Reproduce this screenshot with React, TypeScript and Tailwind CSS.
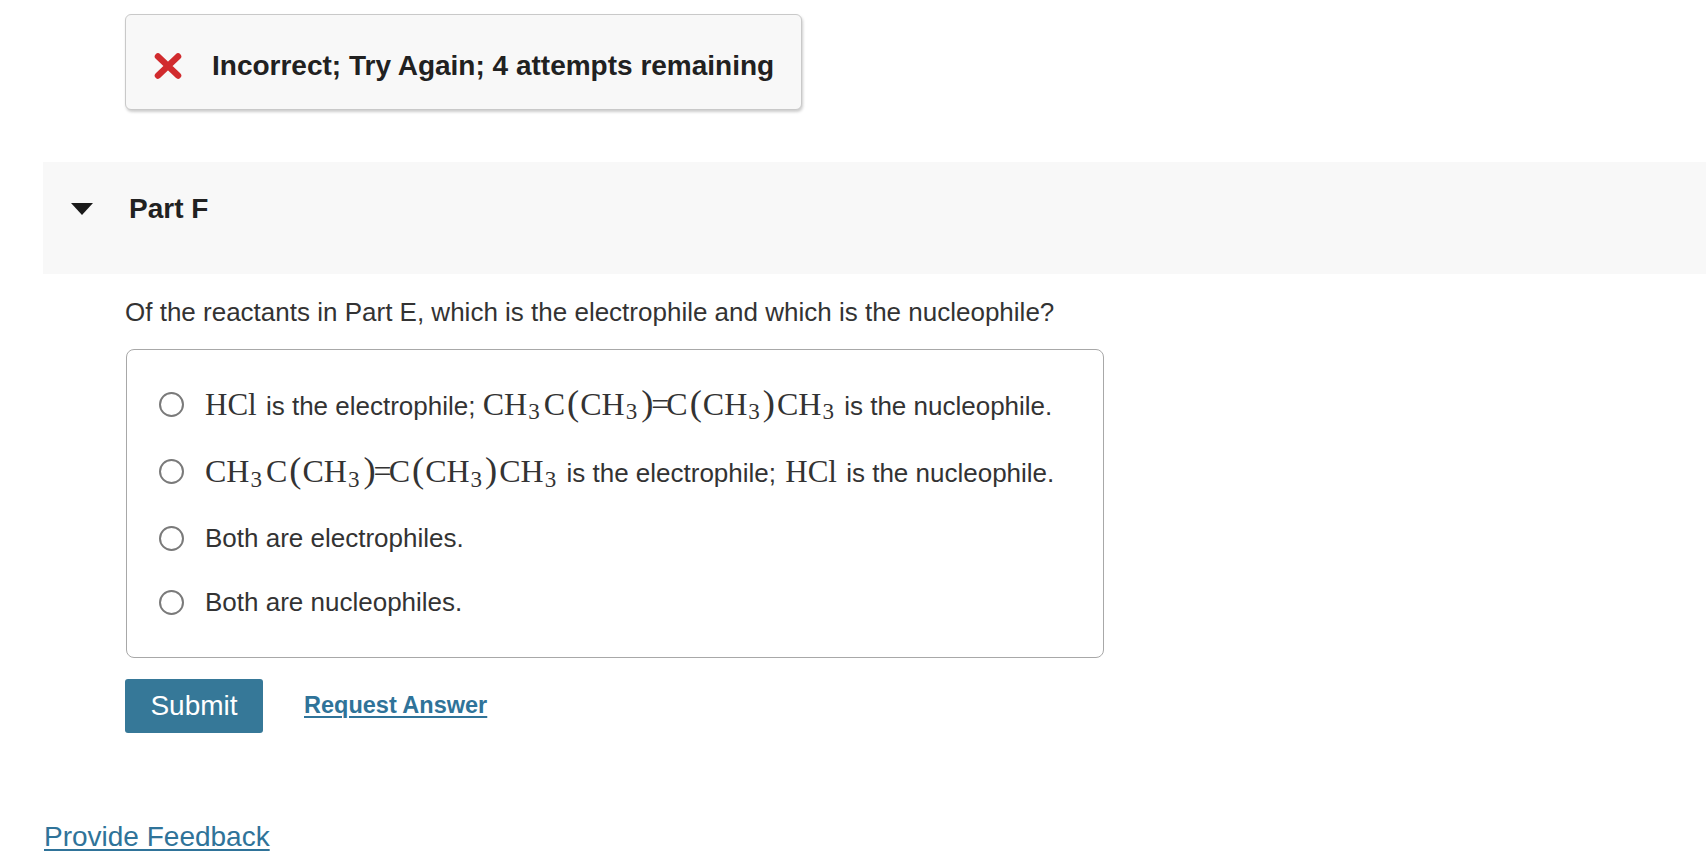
import React from "react";

const S3 = () => (
  <span className="relative top-[0.2em] text-[0.72em] ml-[1px] mr-[3px]">3</span>
);

const CH3 = () => (
  <span>
    CH
    <S3 />
  </span>
);

const P = ({ c, cls }: { c: string; cls: string }) => (
  <span className={"inline-block text-[1.14em] leading-none " + cls}>{c}</span>
);

const Formula = () => (
  <span className="font-['Liberation_Serif',serif] text-[32px] text-[#333] whitespace-nowrap">
    <CH3 />
    <span className="ml-[1px]">C</span>
    <P c="(" cls="ml-[2px] mr-[1px]" />
    <CH3 />
    <P c=")" cls="ml-[1px]" />
    <span className="-ml-[2px] -mr-[3px]">=</span>
    <span>C</span>
    <P c="(" cls="ml-[2px] mr-[1px]" />
    <CH3 />
    <P c=")" cls="mr-[2px]" />
    <CH3 />
  </span>
);

const HCl = () => (
  <span className="font-['Liberation_Serif',serif] text-[31px] text-[#333] mx-[2px]">HCl</span>
);

const Radio = () => (
  <span className="inline-block w-[25px] h-[25px] rounded-full border-2 border-[#7a7a7a] bg-white shrink-0" />
);

export default function App() {
  return (
    <div className="w-[1706px] h-[860px] overflow-hidden bg-white font-['Liberation_Sans',Arial,sans-serif] text-[#333]">
      <div className="pt-[14px] pl-[125px]">
        <div className="w-[677px] h-[96px] border border-[#c9c9c9] rounded-[6px] bg-[#f8f8f8] shadow-[1px_2px_3px_rgba(0,0,0,0.2)] flex items-center pl-[28px] pt-[7px]">
          <svg width="28" height="26" viewBox="0 0 28 26" className="shrink-0">
            <path d="M4 3.5 L24 22.5 M24 3.5 L4 22.5" stroke="#d12b2e" strokeWidth="6.5" strokeLinecap="round" />
          </svg>
          <span className="ml-[30px] text-[28px] font-bold text-[#212121] leading-none">
            Incorrect; Try Again; 4 attempts remaining
          </span>
        </div>
      </div>

      <div className="mt-[52px] ml-[43px] h-[112px] bg-[#f8f8f8] flex items-center pb-[18px]">
        <svg width="22" height="12" viewBox="0 0 22 12" className="ml-[28px] shrink-0">
          <path d="M0 0 L22 0 L11 12 Z" fill="#1a1a1a" />
        </svg>
        <span className="ml-[36px] text-[28px] font-bold text-[#212121] leading-none">Part F</span>
      </div>

      <div className="ml-[125px] mt-[20px] text-[26px] leading-[36px]">
        Of the reactants in Part E, which is the electrophile and which is the nucleophile?
      </div>

      <div className="ml-[126px] mt-[19px] w-[978px] h-[309px] border-[1.5px] border-[#a8a8a8] rounded-[8px] pt-[21px] pl-[32px]">
        <div className="h-[66px] flex items-center">
          <Radio />
          <span className="ml-[19px] text-[26px] whitespace-nowrap">
            <HCl /> is the electrophile; <Formula /> is the nucleophile.
          </span>
        </div>
        <div className="h-[69px] flex items-center">
          <Radio />
          <span className="ml-[21px] text-[26px] whitespace-nowrap">
            <Formula /> is the electrophile; <HCl /> is the nucleophile.
          </span>
        </div>
        <div className="h-[64px] flex items-center">
          <Radio />
          <span className="ml-[21px] text-[26px]">Both are electrophiles.</span>
        </div>
        <div className="h-[64px] flex items-center">
          <Radio />
          <span className="ml-[21px] text-[26px]">Both are nucleophiles.</span>
        </div>
      </div>

      <div className="ml-[125px] mt-[21px] flex items-center">
        <button className="w-[138px] h-[54px] rounded-[3px] bg-[#367898] text-white text-[28px] leading-none">
          Submit
        </button>
        <a className="ml-[41px] text-[23.5px] font-bold text-[#2f7399] underline underline-offset-[3px] decoration-[2px]">
          Request Answer
        </a>
      </div>

      <div className="ml-[44px] mt-[88px]">
        <a className="text-[28px] leading-[32px] text-[#2f7399] underline underline-offset-[3px] decoration-[2px]">
          Provide Feedback
        </a>
      </div>
    </div>
  );
}
